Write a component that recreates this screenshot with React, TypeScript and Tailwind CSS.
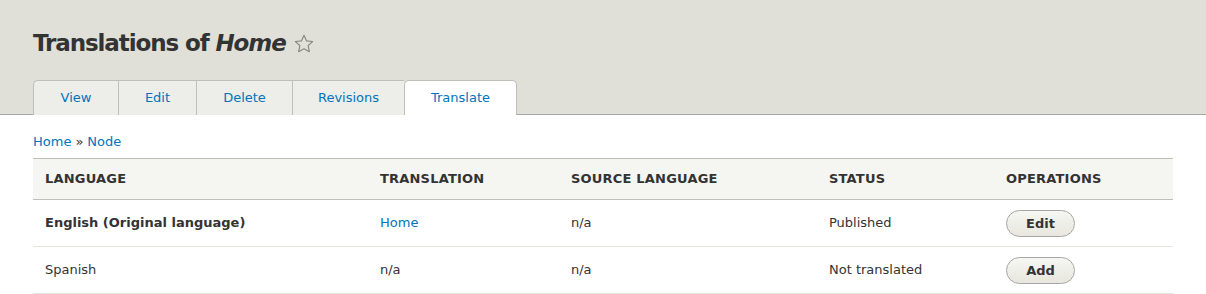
import React from "react";

const tabs = ["View", "Edit", "Delete", "Revisions", "Translate"];
const tabWidths = ["w-[85px]", "w-[78px]", "w-[96px]", "w-[112px]", "w-[113px]"];

const cols = [
  { label: "Language", w: "w-[335px]" },
  { label: "Translation", w: "w-[191px]" },
  { label: "Source language", w: "w-[258px]" },
  { label: "Status", w: "w-[177px]" },
  { label: "Operations", w: "flex-1" },
];

const rows = [
  { lang: "English (Original language)", bold: true, translation: "Home", link: true, source: "n/a", status: "Published", op: "Edit" },
  { lang: "Spanish", bold: false, translation: "n/a", link: false, source: "n/a", status: "Not translated", op: "Add" },
];

function Star() {
  return (
    <svg width="22" height="22" viewBox="0 0 24 24" className="ml-[7px] mt-[2px]">
      <path
        d="M12 2.5l2.8 6.1 6.6.7-4.9 4.5 1.4 6.6L12 17.1l-5.9 3.3 1.4-6.6-4.9-4.5 6.6-.7z"
        fill="none"
        stroke="#8a8a82"
        strokeWidth="1.3"
        strokeLinejoin="round"
      />
    </svg>
  );
}

export default function App() {
  return (
    <div className="w-[1206px] h-[294px] bg-white text-[#333] overflow-hidden" style={{ fontFamily: '"DejaVu Sans", Verdana, sans-serif' }}>
      {/* Header */}
      <div className="bg-[#e0e0d8] h-[115px] border-b border-[#a6a6a6] px-[33px] flex flex-col">
        <div className="h-[80px] flex items-center pt-[6px]">
          <h1 className="text-[23px] font-bold leading-none text-[#333] tracking-[-1.1px]">
            Translations of <em>Home</em>
          </h1>
          <Star />
        </div>
        <div className="flex h-[34px]">
          {tabs.map((t, i) => {
            const active = t === "Translate";
            return (
              <div
                key={t}
                className={`${tabWidths[i]} h-[35px] flex items-center justify-center text-[13px] text-[#0074bd] border-t border-[#bfbfba] ${
                  active
                    ? "bg-white border-x border-[#a6a6a6] rounded-t-[5px] relative z-10"
                    : `bg-[#ededea] border-l ${i === 0 ? "rounded-tl-[5px]" : ""}`
                }`}
              >
                <span className="pb-[1px]">{t}</span>
              </div>
            );
          })}
        </div>
      </div>

      {/* Content */}
      <div className="px-[33px]">
        <div className="h-[43px] flex items-center text-[13px] pt-[10px]">
          <span className="text-[#0074bd]">Home</span>
          <span className="mx-[4px] text-[#333]">»</span>
          <span className="text-[#0074bd]">Node</span>
        </div>
        <div className="w-[1140px]">
          <div className="flex h-[42px] items-center bg-[#f5f5f2] border-y border-[#bfbfba] text-[13px] font-bold uppercase tracking-[0.2px]">
            {cols.map((c) => (
              <div key={c.label} className={`${c.w} pl-[12px]`}>
                {c.label}
              </div>
            ))}
          </div>
          {rows.map((r) => (
            <div key={r.lang} className="flex h-[47px] items-center border-b border-[#e6e4df] text-[13px]">
              <div className={`${cols[0].w} pl-[12px] ${r.bold ? "font-bold" : ""}`}>{r.lang}</div>
              <div className={`${cols[1].w} pl-[12px] ${r.link ? "text-[#0074bd]" : ""}`}>{r.translation}</div>
              <div className={`${cols[2].w} pl-[12px]`}>{r.source}</div>
              <div className={`${cols[3].w} pl-[12px]`}>{r.status}</div>
              <div className="flex-1 pl-[12px]">
                <button className="w-[69px] h-[27px] rounded-[20px] border border-[#a6a6a6] bg-gradient-to-b from-[#f6f6f3] to-[#e7e7df] text-[13px] font-bold text-[#333] leading-none">
                  {r.op}
                </button>
              </div>
            </div>
          ))}
        </div>
      </div>
    </div>
  );
}
